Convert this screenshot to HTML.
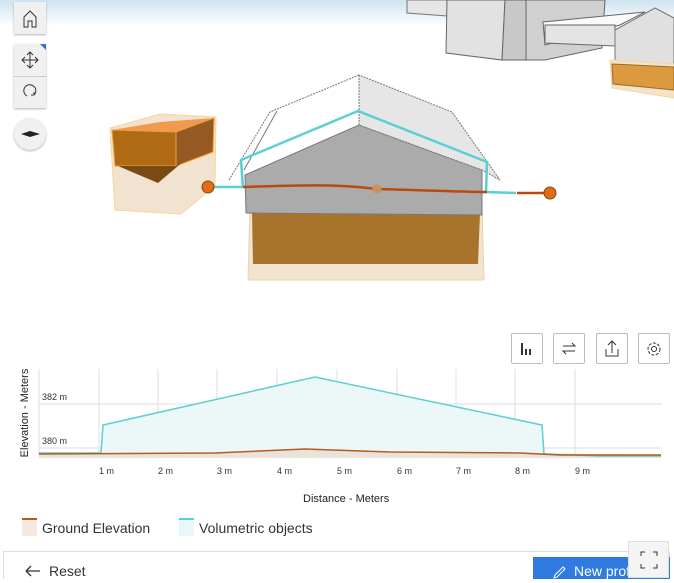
<!DOCTYPE html>
<html><head><meta charset="utf-8"><style>
body{margin:0;width:674px;height:579px;overflow:hidden;background:#fff;font-family:"Liberation Sans",sans-serif;position:relative}
.abs{position:absolute}
.btn{position:absolute;background:#f0f0f0;box-shadow:0 1px 2px rgba(0,0,0,.3)}
.tb{position:absolute;top:333px;width:32px;height:31px;border:1px solid #bbb;background:#fff;box-sizing:border-box;border-radius:2px}
.t{position:absolute;font-size:9px;color:#333}
</style></head><body>
<svg class="abs" style="left:0;top:0" width="674" height="579">
<defs><linearGradient id="sky" x1="0" y1="0" x2="0" y2="1"><stop offset="0" stop-color="#cfe3f1"/><stop offset="1" stop-color="#fff"/></linearGradient></defs>
<rect width="674" height="26" fill="url(#sky)"/>
<!-- buildings top right -->
<polygon points="407,0 447,0 447,16 407,13" fill="#e6e6e6" stroke="#777"/>
<polygon points="447,0 505,0 502,60 446,53" fill="#e2e2e2" stroke="#666"/>
<polygon points="505,0 526,0 526,60 502,60" fill="#c8c8c8" stroke="#666"/>
<polygon points="526,0 605,0 602,48 545,60 526,60" fill="#d0d0d0" stroke="#666"/>
<polygon points="543,22 645,12 620,25 545,45" fill="#fafafa" stroke="#666"/>
<polygon points="545,25 615,25 615,46 545,43" fill="#e4e4e4" stroke="#666"/>
<polygon points="615,30 655,8 674,18 674,70 615,62" fill="#e0e0e0" stroke="#777"/>
<polygon points="610,60 674,64 674,98 612,88" fill="#f3e3c8" stroke="#f0d8a8"/>
<polygon points="612,64 674,67 674,90 613,84" fill="#dc9a40" stroke="#a06a20"/>
<!-- left cube -->
<polygon points="110,128 160,114 216,117 215,186 181,214 115,210" fill="#f0e0cc" stroke="#fcd088" opacity=".9"/>
<polygon points="112,130 176,132 176,166 115,166" fill="#b06a14" stroke="#f0a030"/>
<polygon points="176,132 214,118 213,152 176,166" fill="#955a24" stroke="#f0a030"/>
<polygon points="112,130 160,122 214,118 176,132" fill="#f09a50"/>
<polygon points="118,166 176,166 185,160 158,183" fill="#7a4a14"/>
<!-- house base -->
<polygon points="250,205 482,205 484,280 248,280" fill="#f1e4d0" stroke="#e8d4b0"/>
<polygon points="252,213 480,213 478,264 253,264" fill="#a8742c"/>
<polygon points="245,175 359,125 482,170 482,215 246,213" fill="#ababab" stroke="#777"/>
<polygon points="359,75 359,125 482,170 500,180 452,112" fill="#e6e6e6" stroke="#777" stroke-dasharray="2 1"/>
<polyline points="229,180 270,112 359,75" fill="none" stroke="#777" stroke-dasharray="2 1"/>
<polyline points="244,170 277,111" fill="none" stroke="#777"/>
<polyline points="243,188 241,160 358,111 487,162 486,192 516,193" fill="none" stroke="#5ccfd2" stroke-width="2.5"/>
<line x1="214" y1="187" x2="243" y2="187" stroke="#5ccfd2" stroke-width="2.5"/>
<path d="M243,187 C300,185 340,184 376,189 C420,190 470,192 487,192" stroke="#b84a10" stroke-width="2.5" fill="none"/>
<line x1="517" y1="193" x2="548" y2="193" stroke="#b84a10" stroke-width="2.5"/>
<circle cx="208" cy="187" r="6" fill="#e06c14" stroke="#8a4a10"/>
<circle cx="377" cy="189" r="4.5" fill="#c8925a"/>
<circle cx="550" cy="193" r="6" fill="#e06c14" stroke="#8a4a10"/>
<!-- chart -->
<g stroke="#ddd" stroke-width="1">
<line x1="39" y1="369" x2="39" y2="457"/><line x1="99" y1="369" x2="99" y2="457"/><line x1="158" y1="369" x2="158" y2="457"/><line x1="217" y1="369" x2="217" y2="457"/><line x1="277" y1="369" x2="277" y2="457"/><line x1="337" y1="369" x2="337" y2="457"/><line x1="397" y1="369" x2="397" y2="457"/><line x1="456" y1="369" x2="456" y2="457"/><line x1="515" y1="369" x2="515" y2="457"/><line x1="575" y1="369" x2="575" y2="457"/>
<line x1="39" y1="404" x2="662" y2="404"/><line x1="39" y1="448" x2="662" y2="448"/>
</g>
<polygon points="39,453 101,453 103,425 315,377 542,425 544,454 600,456 661,456 661,458 39,458" fill="#ecf8f8"/>
<polygon points="39,454 215,453 305,449 390,452 540,453 661,455 661,458 39,458" fill="#e8e4dc"/>
<polyline points="39,453 101,453 103,425 315,377 542,425 544,454 600,456 661,456" fill="none" stroke="#5ccfd2" stroke-width="1.5"/>
<polyline points="39,454 215,453 305,449 390,452 520,453 560,455 661,455" fill="none" stroke="#b85a20" stroke-width="1.5"/>
<!-- legend -->
<rect x="22" y="519" width="15" height="17" fill="#f4e8e0"/><line x1="22" y1="519" x2="37" y2="519" stroke="#b85a20" stroke-width="2"/>
<rect x="179" y="519" width="15" height="17" fill="#e8f8f8"/><line x1="179" y1="519" x2="194" y2="519" stroke="#5ccfd2" stroke-width="2"/>
<!-- bottom -->
<rect x="3.5" y="551.5" width="666" height="40" fill="#fff" stroke="#ddd"/>
<rect x="533" y="557" width="137" height="30" fill="#2f7bdf"/>
<path d="M26,571 h14 M26,571 l5,-5 M26,571 l5,5" stroke="#333" stroke-width="1.3" fill="none"/>
<path d="M555,575 l8,-8 2,2 -8,8 -3,1z" stroke="#fff" fill="none"/>
</svg>
<div class="btn" style="left:14px;top:2px;width:32px;height:32px"><svg width="32" height="32"><path d="M10,25V15l6,-6 6,6v10h-4v-6h-4v6z" fill="none" stroke="#333"/></svg></div>
<div class="btn" style="left:14px;top:44px;width:32px;height:64px"><svg width="32" height="64"><path d="M16,8v16M8,16h16M13,11l3,-3 3,3M13,21l3,3 3,-3M11,13l-3,3 3,3M21,13l3,3 -3,3" fill="none" stroke="#333"/><polygon points="26,0 32,0 32,6" fill="#2f6fd8"/><line x1="0" y1="32.5" x2="32" y2="32.5" stroke="#ccc"/><path d="M20,51a6,6 0 1 0 -7,1M20,51l0,-3M20,51l-3,0" fill="none" stroke="#333"/></svg></div>
<div class="btn" style="left:14px;top:118px;width:32px;height:32px;border-radius:50%"><svg width="32" height="32"><path d="M7,16l9,-3 10,3 -10,3z" fill="#222"/></svg></div>
<div class="tb" style="left:511px"><svg width="30" height="29"><path d="M10,9v12M14,15v6M18,15v6" stroke="#333" stroke-width="2" fill="none"/></svg></div>
<div class="tb" style="left:553px"><svg width="30" height="29"><path d="M9,12h12l-3,-3M21,17H9l3,3" stroke="#333" fill="none"/></svg></div>
<div class="tb" style="left:596px"><svg width="30" height="29"><path d="M15,7v12M11,11l4,-4 4,4M9,15v7h12v-7" stroke="#333" fill="none"/></svg></div>
<div class="tb" style="left:638px"><svg width="30" height="29"><circle cx="15" cy="15" r="6" fill="none" stroke="#333" stroke-dasharray="3 1.5"/><circle cx="15" cy="15" r="2.5" fill="none" stroke="#333"/></svg></div>
<div class="t" style="left:42px;top:392px">382 m</div>
<div class="t" style="left:42px;top:436px">380 m</div>
<div class="t" style="left:99px;top:466px">1 m</div><div class="t" style="left:158px;top:466px">2 m</div><div class="t" style="left:217px;top:466px">3 m</div><div class="t" style="left:277px;top:466px">4 m</div><div class="t" style="left:337px;top:466px">5 m</div><div class="t" style="left:397px;top:466px">6 m</div><div class="t" style="left:456px;top:466px">7 m</div><div class="t" style="left:515px;top:466px">8 m</div><div class="t" style="left:575px;top:466px">9 m</div>
<div class="abs" style="left:-25px;top:407px;width:100px;font-size:11px;color:#222;transform:rotate(-90deg);text-align:center">Elevation - Meters</div>
<div class="abs" style="left:303px;top:493px;font-size:11px;color:#222">Distance - Meters</div>
<div class="abs" style="left:42px;top:520px;font-size:14px;color:#333">Ground Elevation</div>
<div class="abs" style="left:199px;top:520px;font-size:14px;color:#333">Volumetric objects</div>
<div class="abs" style="left:49px;top:563px;font-size:14px;color:#333">Reset</div>
<div class="abs" style="left:574px;top:563px;font-size:14px;color:#fff">New profile</div>
<div class="abs" style="left:628px;top:541px;width:41px;height:37px;background:#f4f4f4;border:1px solid #ddd;box-sizing:border-box"><svg width="40" height="36"><path d="M12,14v-4h4M24,10h4v4M28,22v4h-4M16,26h-4v-4" stroke="#333" fill="none"/></svg></div>
</body></html>
